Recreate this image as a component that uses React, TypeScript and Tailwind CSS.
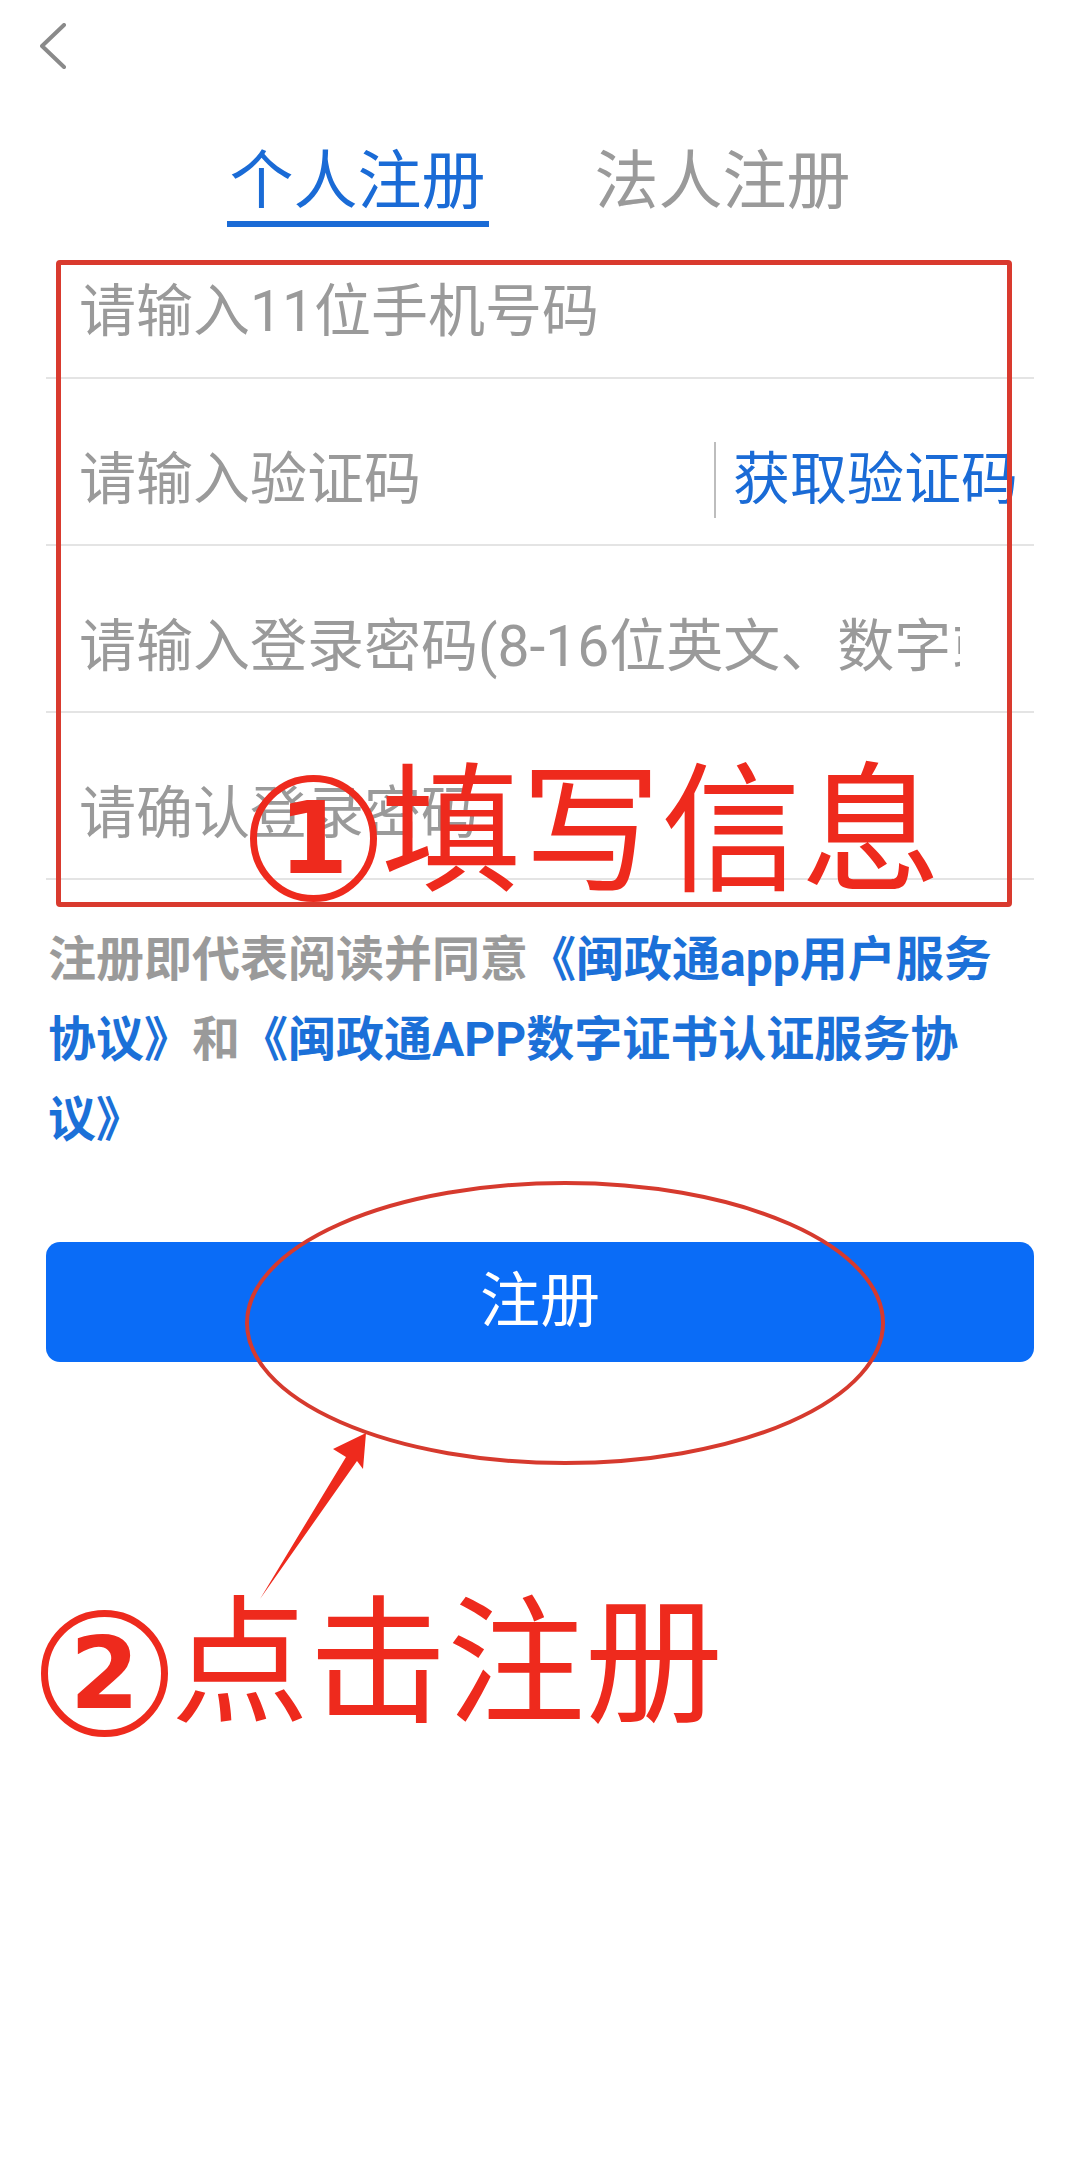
import React from "react";

const gray = "text-[#9a9a9a]";

function BackIcon() {
  return (
    <svg width="28" height="46" viewBox="0 0 28 46" fill="none">
      <polyline
        points="24,2 2,23 24,44"
        stroke="#8a8a8a"
        strokeWidth="4"
        strokeLinecap="round"
        strokeLinejoin="round"
      />
    </svg>
  );
}

function Circled({ n, className }: { n: string; className: string }) {
  return (
    <div
      className={`absolute flex h-[127px] w-[127px] items-center justify-center rounded-full border-[7px] border-[#ee2a1d] ${className}`}
    >
      <span className="font-['DejaVu_Sans',sans-serif] text-[100px] leading-none font-bold text-[#ee2a1d]">
        {n}
      </span>
    </div>
  );
}

export default function App() {
  return (
    <div className="relative min-h-[2160px] w-[1080px] overflow-hidden bg-white font-['Roboto','Noto_Sans_CJK_SC',sans-serif]">
      {/* header */}
      <div className="h-[68px] pt-[23px] pl-[40px]">
        <BackIcon />
      </div>

      <div className="mt-[82px] flex items-start justify-center gap-[109px]">
        <div className="flex flex-col">
          <span className="text-[64px] leading-[64px] text-[#1a6bd6]">个人注册</span>
          <div className="-mx-[3px] mt-[7px] h-[6px] bg-[#1a6bd6]" />
        </div>
        <span className={`text-[64px] leading-[64px] ${gray}`}>法人注册</span>
      </div>

      {/* form */}
      <div className="px-[46px]">
        <div className="flex h-[152px] items-center border-b-2 border-[#e4e4e4] pt-[20px] pl-[33px]">
          <input
            className="w-full bg-transparent text-[57px] leading-[80px] outline-none placeholder:text-[#9a9a9a]"
            placeholder="请输入11位手机号码"
          />
        </div>
        <div className="flex h-[167px] items-center border-b-2 border-[#e4e4e4] pt-[36px] pr-[16px] pl-[33px]">
          <input
            className="min-w-0 flex-1 bg-transparent text-[57px] leading-[80px] outline-none placeholder:text-[#9a9a9a]"
            placeholder="请输入验证码"
          />
          <div className="h-[76px] w-[2px] bg-[#bdbdbd]" />
          <span className="ml-[17px] text-[57px] leading-[80px] whitespace-nowrap text-[#1a6bd6]">
            获取验证码
          </span>
        </div>
        <div className="flex h-[167px] items-center border-b-2 border-[#e4e4e4] pt-[36px] pl-[33px]">
          <input
            type="password"
            className="w-[881px] bg-transparent text-[57px] leading-[80px] outline-none placeholder:text-[#9a9a9a]"
            placeholder="请输入登录密码(8-16位英文、数字或符号)"
          />
        </div>
        <div className="flex h-[167px] items-center border-b-2 border-[#e4e4e4] pt-[36px] pl-[33px]">
          <input
            type="password"
            className="w-full bg-transparent text-[57px] leading-[80px] outline-none placeholder:text-[#9a9a9a]"
            placeholder="请确认登录密码"
          />
        </div>

        <p className={`mt-[40px] pl-[2px] text-[48px] leading-[80px] font-bold ${gray}`}>
          注册即代表阅读并同意<span className="text-[#1b70d8]">《闽政通app用户服务</span>
          <br />
          <span className="text-[#1b70d8]">协议》</span>和
          <span className="text-[#1b70d8]">《闽政通APP数字证书认证服务协</span>
          <br />
          <span className="text-[#1b70d8]">议》</span>
        </p>

        <button
          type="button"
          className="mt-[82px] flex h-[120px] w-full items-center justify-center rounded-[14px] bg-[#0a6cf7] text-[60px] text-white"
        >
          注册
        </button>
      </div>

      {/* annotations */}
      <div className="pointer-events-none absolute top-[260px] left-[56px] h-[647px] w-[956px] rounded-[4px] border-[5px] border-[#d93a2e]" />

      <Circled n="1" className="top-[775px] left-[250px]" />
      <div className="absolute top-[749px] left-[381px] font-['Noto_Sans_CJK_SC',sans-serif] text-[140px] leading-[140px] font-normal whitespace-nowrap text-[#ee2a1d]">
        填写信息
      </div>

      <svg className="pointer-events-none absolute top-0 left-0" width="1080" height="2160">
        <ellipse cx="565" cy="1323" rx="318" ry="140" fill="none" stroke="#d63a2e" strokeWidth="4" />
        <polygon
          points="260,1599 346,1457 333,1449 366,1433 363,1469 357,1461"
          fill="#ee2a1d"
        />
      </svg>

      <Circled n="2" className="top-[1610px] left-[41px]" />
      <div className="absolute top-[1582px] left-[171px] font-['Noto_Sans_CJK_SC',sans-serif] text-[138px] leading-[138px] font-normal whitespace-nowrap text-[#ee2a1d]">
        点击注册
      </div>
    </div>
  );
}
